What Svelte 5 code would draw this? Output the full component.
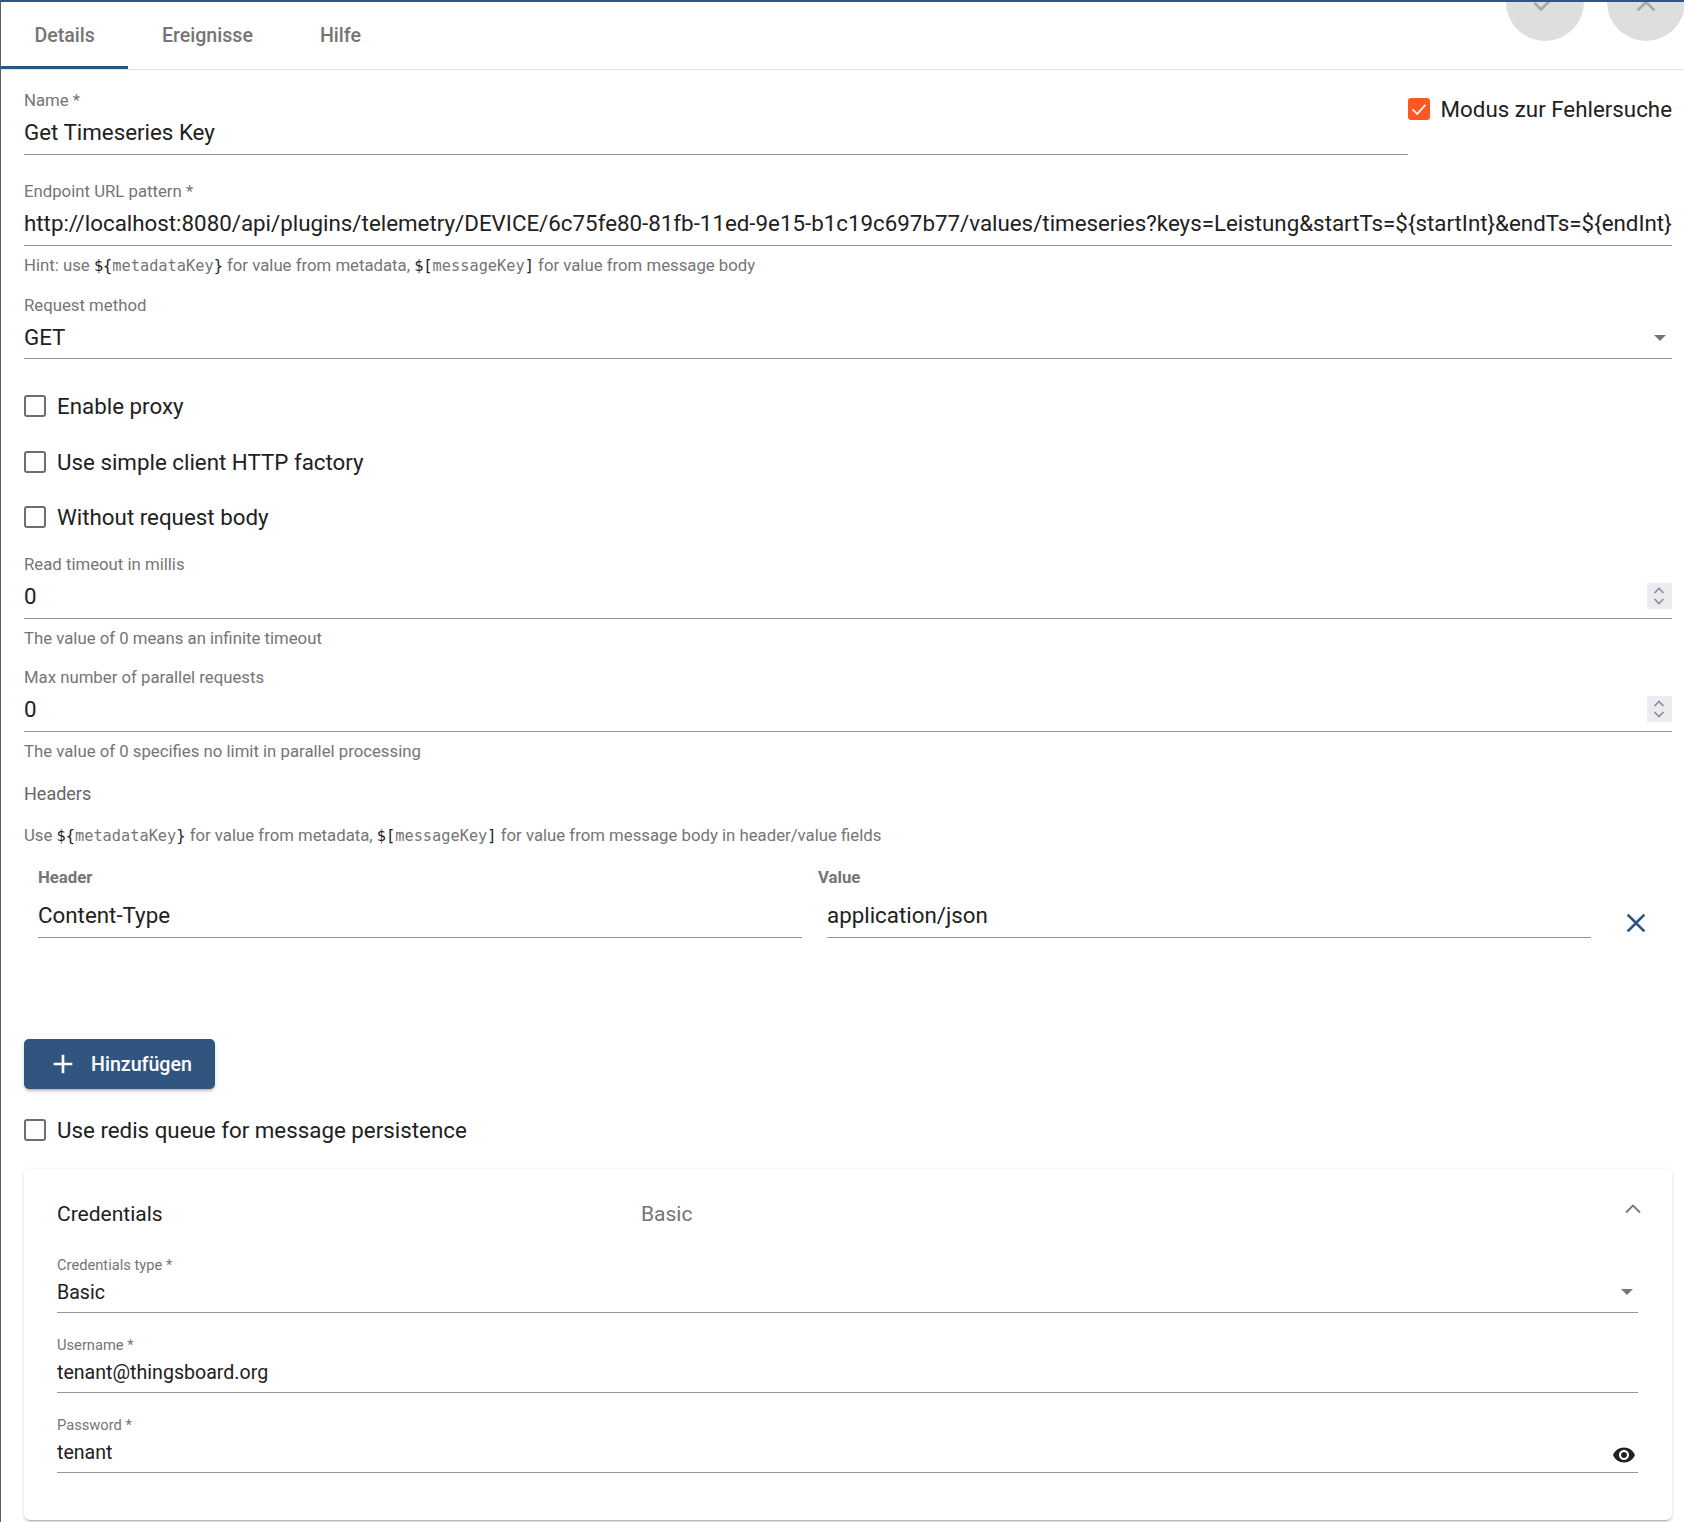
<script>
  const url = "http://localhost:8080/api/plugins/telemetry/DEVICE/6c75fe80-81fb-11ed-9e15-b1c19c697b77/values/timeseries?keys=Leistung&startTs=${startInt}&endTs=${endInt}&agg=NONE";
  const tabs = ["Details", "Ereignisse", "Hilfe"];
  const checks = ["Enable proxy", "Use simple client HTTP factory", "Without request body"];
</script>

<div class="page">
  <!-- tab bar with the two cut off round buttons -->
  <div class="tabs">
    {#each tabs as tab, i}
      <div class="tab" class:active={i === 0}>{tab}</div>
    {/each}
    <div class="round one">
      <svg viewBox="0 0 24 24" width="32" height="32"><path d="M9 16.2 4.8 12l-1.4 1.4L9 19 21 7l-1.4-1.4z" fill="#a8a8a8"/></svg>
    </div>
    <div class="round two">
      <svg viewBox="0 0 24 24" width="32" height="32"><path d="M19 6.41 17.59 5 12 10.59 6.41 5 5 6.41 10.59 12 5 17.59 6.41 19 12 13.41 17.59 19 19 17.59 13.41 12z" fill="#a8a8a8"/></svg>
    </div>
  </div>

  <div class="form">
    <div class="name-row">
      <div class="field name">
        <div class="label">Name *</div>
        <div class="value">Get Timeseries Key</div>
      </div>
      <div class="check debug">
        <span class="box on">
          <svg viewBox="0 0 24 24" width="22" height="22"><path d="M5 12.5 10 17.5 19 7.5" fill="none" stroke="#fff" stroke-width="1.9"/></svg>
        </span>
        Modus zur Fehlersuche
      </div>
    </div>

    <div class="field url">
      <div class="label">Endpoint URL pattern *</div>
      <div class="value">{url}</div>
    </div>
    <div class="hint">Hint: use <code class="d">{"${"}<span>metadataKey</span>{"}"}</code> for value from metadata, <code class="d">{"$["}<span>messageKey</span>]</code> for value from message body</div>

    <div class="field method">
      <div class="label">Request method</div>
      <div class="value">GET</div>
      <i class="arrow"></i>
    </div>

    <div class="checks">
      {#each checks as c}
        <div class="check"><span class="box"></span>{c}</div>
      {/each}
    </div>

    <div class="field timeout">
      <div class="label">Read timeout in millis</div>
      <div class="value">0</div>
      <div class="spin">
        <svg viewBox="0 0 24 26" width="24" height="26"><path d="M7.500 10 12 5.500 16.500 10M7.500 16 12 20.500 16.500 16" fill="none" stroke="#8a8a96" stroke-width="1.6"/></svg>
      </div>
    </div>
    <div class="hint plain">The value of 0 means an infinite timeout</div>

    <div class="field parallel">
      <div class="label">Max number of parallel requests</div>
      <div class="value">0</div>
      <div class="spin">
        <svg viewBox="0 0 24 26" width="24" height="26"><path d="M7.500 10 12 5.500 16.500 10M7.500 16 12 20.500 16.500 16" fill="none" stroke="#8a8a96" stroke-width="1.6"/></svg>
      </div>
    </div>
    <div class="hint plain">The value of 0 specifies no limit in parallel processing</div>

    <div class="headers-title">Headers</div>
    <div class="hint use">Use <code class="d">{"${"}<span>metadataKey</span>{"}"}</code> for value from metadata, <code class="d">{"$["}<span>messageKey</span>]</code> for value from message body in header/value fields</div>

    <div class="kv-head">
      <div>Header</div>
      <div>Value</div>
    </div>
    <div class="kv-row">
      <div class="kv-cell">Content-Type</div>
      <div class="kv-cell second">application/json</div>
      <svg class="remove" viewBox="0 0 24 24" width="32" height="32"><path d="M19 6.41 17.59 5 12 10.59 6.41 5 5 6.41 10.59 12 5 17.59 6.41 19 12 13.41 17.59 19 19 17.59 13.41 12z" fill="#305680"/></svg>
    </div>

    <button class="add">
      <svg viewBox="0 0 24 24" width="32" height="32"><path d="M19 13h-6v6h-2v-6H5v-2h6V5h2v6h6z" fill="#fff"/></svg>
      Hinzufügen
    </button>

    <div class="check redis"><span class="box"></span>Use redis queue for message persistence</div>

    <div class="card">
      <div class="card-head">
        <div class="card-title">Credentials</div>
        <div class="card-desc">Basic</div>
        <svg class="chevron" viewBox="0 0 24 24" width="24" height="24"><path d="M5 15.500 12 8.500 19 15.500" fill="none" stroke="#777" stroke-width="1.800"/></svg>
      </div>
      <div class="sub">
        <div class="label">Credentials type *</div>
        <div class="value">Basic</div>
        <i class="arrow"></i>
      </div>
      <div class="sub">
        <div class="label">Username *</div>
        <div class="value">tenant@thingsboard.org</div>
      </div>
      <div class="sub">
        <div class="label">Password *</div>
        <div class="value">tenant</div>
        <svg class="eye" viewBox="0 0 24 24" width="24" height="24"><path d="M12 4.500C7 4.500 2.730 7.610 1 12c1.730 4.390 6 7.500 11 7.500s9.270-3.110 11-7.500c-1.730-4.390-6-7.500-11-7.500zM12 17c-2.760 0-5-2.240-5-5s2.240-5 5-5 5 2.240 5 5-2.240 5-5 5zm0-8c-1.660 0-3 1.340-3 3s1.340 3 3 3 3-1.340 3-3-1.340-3-3-3z" fill="#222"/></svg>
      </div>
    </div>
  </div>
</div>

<style>
  :global(body) {
    margin: 0;
    background: #fff;
  }
  .page {
    height: 1522px;
    box-sizing: border-box;
    overflow: hidden;
    border-top: 2px solid #305680;
    border-left: 1px solid #5c5c5c;
    font-family: Roboto, sans-serif;
    color: #212121;
    position: relative;
  }

  .tabs {
    height: 67px;
    display: flex;
    border-bottom: 1px solid #e0e0e0;
    position: relative;
    overflow: hidden;
  }
  .tab {
    height: 67px;
    padding: 2px 33.5px 0;
    box-sizing: border-box;
    display: flex;
    align-items: center;
    border-bottom: 3px solid transparent;
    font-size: 19.6px;
    font-weight: 500;
    color: #757575;
  }
  .tab.active {
    border-bottom-color: #305680;
  }
  .round {
    position: absolute;
    top: -39px;
    width: 78px;
    height: 78px;
    border-radius: 50%;
    background: #dedede;
    display: flex;
    align-items: center;
    justify-content: center;
  }
  .round.one { left: 1505px; }
  .round.two { left: 1606px; }

  .form {
    padding: 0 12px 0 23px;
  }
  .name-row {
    display: flex;
    align-items: flex-start;
  }
  .field {
    position: relative;
    height: 85px;
    border-bottom: 1px solid #949494;
    box-sizing: border-box;
    padding-top: 20px;
    margin-bottom: 10px;
  }
  .label {
    font-size: 16.75px;
    line-height: 20px;
    color: #757575;
  }
  .value {
    font-size: 22.33px;
    line-height: 28px;
    margin-top: 8px;
    white-space: nowrap;
    overflow: hidden;
  }
  .name {
    flex: 1;
  }
  .debug {
    margin-top: 23px;
    height: 32px;
  }

  .check {
    display: flex;
    align-items: center;
    font-size: 22.33px;
    line-height: 32px;
    white-space: nowrap;
  }
  .box {
    width: 22px;
    height: 22px;
    box-sizing: border-box;
    border: 2px solid #6e6e6e;
    border-radius: 3px;
    margin-right: 11px;
    flex: none;
  }
  .box.on {
    background: #ff5722;
    border: none;
  }
  .box.on svg {
    display: block;
  }
  .checks {
    margin-top: 31px;
    display: flex;
    flex-direction: column;
    gap: 23.7px;
  }

  .hint {
    font-size: 16.75px;
    line-height: 20px;
    color: #757575;
    margin-top: -1px;
    white-space: nowrap;
  }
  code {
    font-family: "DejaVu Sans Mono", monospace;
    font-size: 15.3px;
    color: #212121;
  }
  code span {
    color: #757575;
  }

  .url { margin-top: -4px; }
  .method { margin-top: -1px; height: 84px; }
  .timeout { margin-top: 1px; }
  .parallel { margin-top: -1px; }
  .hint.plain { margin-top: -1px; }

  .spin {
    position: absolute;
    right: 0;
    bottom: 9px;
    width: 25px;
    height: 26px;
    background: #ecebf0;
  }
  .spin svg { display: block; }

  .arrow {
    position: absolute;
    right: 6px;
    bottom: 17px;
    width: 0;
    height: 0;
    border-left: 6px solid transparent;
    border-right: 6px solid transparent;
    border-top: 6px solid #757575;
  }

  .headers-title {
    margin-top: 23px;
    font-size: 18px;
    line-height: 20px;
    color: #666;
  }
  .hint.use { margin-top: 21px; }

  .kv-head {
    margin-top: 21px;
    padding-left: 14px;
    display: grid;
    grid-template-columns: 780px 1fr;
    font-size: 16.75px;
    line-height: 20px;
    font-weight: 700;
    color: #757575;
  }
  .kv-row {
    display: flex;
    align-items: flex-start;
    margin-top: 14px;
    padding-left: 14px;
    position: relative;
  }
  .kv-cell {
    width: 764px;
    height: 37px;
    box-sizing: border-box;
    border-bottom: 1px solid #949494;
    font-size: 22.33px;
    line-height: 28px;
  }
  .kv-cell.second { margin-left: 25px; }
  .remove {
    margin-left: 29px;
    margin-top: 6px;
  }

  .add {
    margin-top: 100px;
    width: 191px;
    height: 50px;
    display: flex;
    align-items: center;
    gap: 12px;
    padding: 0 0 0 23px;
    border: none;
    border-radius: 5px;
    background: #305680;
    color: #fff;
    font-family: inherit;
    font-size: 19.6px;
    font-weight: 500;
    box-shadow: 0 3px 3px -2px rgba(0,0,0,.25), 0 2px 4px rgba(0,0,0,.15);
  }
  .redis { margin-top: 25px; }

  .card {
    margin-top: 23px;
    height: 351px;
    box-sizing: border-box;
    border-radius: 6px;
    padding: 0 34px 0 33px;
    box-shadow: 0 2px 2px -1px rgba(0,0,0,.3), 0 1px 4px rgba(0,0,0,.12);
  }
  .card-head {
    height: 64px;
    display: flex;
    position: relative;
    font-size: 21px;
    line-height: 28px;
    padding-top: 31px;
    box-sizing: border-box;
  }
  .card-title { width: 584px; }
  .card-desc { color: #757575; }
  .chevron {
    position: absolute;
    right: -7px;
    top: 28px;
  }
  .sub {
    position: relative;
    height: 80px;
    box-sizing: border-box;
    border-bottom: 1px solid #949494;
    padding-top: 22px;
  }
  .sub .label {
    font-size: 14.7px;
  }
  .sub .value {
    font-size: 19.6px;
    margin-top: 4px;
  }
  .sub .arrow { right: 5px; bottom: 17px; }
  .eye {
    position: absolute;
    right: 2px;
    bottom: 5px;
  }
</style>
